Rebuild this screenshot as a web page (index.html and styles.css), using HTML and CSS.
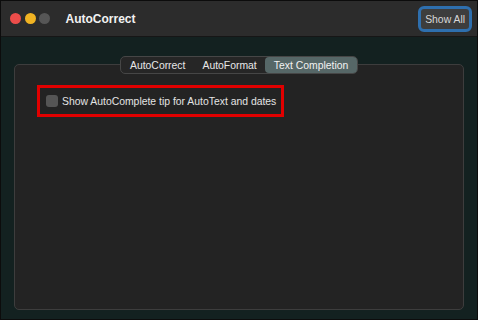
FILE: index.html
```html
<!DOCTYPE html>
<html lang="en">
<head>
    <meta charset="UTF-8">
    <title>AutoCorrect</title>
    <link rel="stylesheet" href="styles.css">
</head>
<body>
    <div class="window">
        <header class="titlebar">
            <div class="lights">
                <span class="light red"></span>
                <span class="light yellow"></span>
                <span class="light gray"></span>
            </div>
            <h1 class="title">AutoCorrect</h1>
            <button class="show-all">Show All</button>
        </header>

        <main class="content">
            <div class="tabs">
                <span class="tab">AutoCorrect</span>
                <span class="tab">AutoFormat</span>
                <span class="tab active">Text Completion</span>
            </div>
            <section class="panel">
                <label class="option">
                    <span class="check"></span>
                    Show AutoComplete tip for AutoText and dates
                </label>
            </section>
        </main>
    </div>
</body>
</html>
```

FILE: styles.css
```css
:root {
--bar: #2c2c2c;
--bg: #132120;
--panel: #232323;
--line: #3d3d3d;
--text: #e4e4e4;
}

*,
*::before,
*::after {
box-sizing: border-box;
}

body {
margin: 0;
font-family: "Liberation Sans", Arial, sans-serif;
background-color: #0c0c0c;
width: 478px;
height: 320px;
overflow: hidden;
}

.window {
display: flex;
flex-direction: column;
width: 478px;
height: 320px;
border: 1px solid #0c0c0c;
background-color: var(--bg);
}

.titlebar {
display: flex;
align-items: center;
height: 36px;
padding: 0 4px 0 9px;
background-color: var(--bar);
border-bottom: 1px solid #161616;
}

.lights {
display: flex;
gap: 3px;
}

.light {
width: 11px;
height: 11px;
border-radius: 50%;
margin-right: 0.5px;
}

.red { background-color: #ec4d4a; }
.yellow { background-color: #f0b323; }
.gray { background-color: #565656; }

.title {
margin: 0 0 0 15px;
font-size: 12px;
font-weight: 700;
color: #f2f2f2;
flex: 1;
}

.show-all {
height: 26px;
padding: 0 4px;
margin-top: 1px;
margin-right: 1px;
font-family: inherit;
font-size: 10.4px;
color: #d8d8d8;
background-color: #3d3d3d;
border: 3px solid #2e6fae;
border-radius: 6px;
}

.content {
position: relative;
flex: 1;
padding: 27px 13px 9px 13px;
}

.tabs {
position: absolute;
top: 19px;
left: 119px;
display: flex;
height: 18px;
padding: 0 1px;
background-color: #262626;
border: 1px solid #464646;
border-radius: 5px;
font-size: 10.4px;
color: #e8e8e8;
}

.tab {
display: flex;
align-items: center;
padding: 0 8px;
}

.tab:first-child {
padding-left: 8px;
padding-right: 9px;
}

.active {
background-color: #566767;
border-radius: 4px;
padding: 0 9px;
margin-right: -1px;
color: #f2f2f2;
}

.panel {
height: 100%;
padding: 20px 22px;
background-color: var(--panel);
border: 1px solid var(--line);
border-radius: 5px;
}

.option {
display: inline-flex;
align-items: center;
gap: 4px;
height: 32px;
padding: 0 5px 0 6px;
border: 3px solid #e10000;
font-size: 10.4px;
color: var(--text);
}

.check {
width: 12px;
height: 12px;
border-radius: 3px;
background-color: #555;
}
```
